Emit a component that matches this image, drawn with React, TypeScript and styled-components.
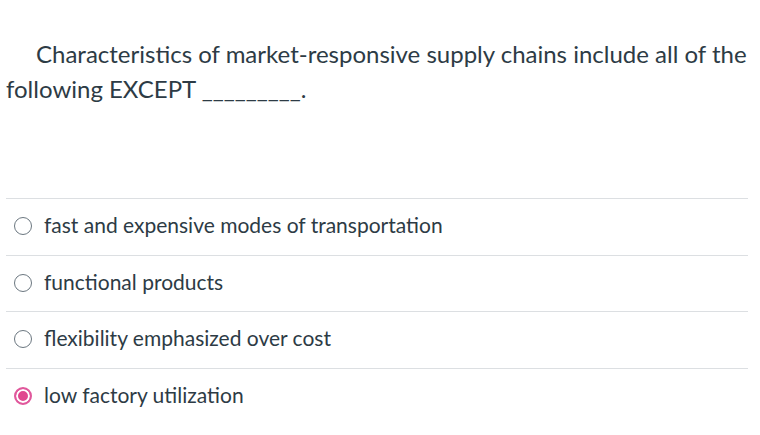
import React from "react";
import styled, { createGlobalStyle } from "styled-components";

const Global = createGlobalStyle`
  html, body { margin: 0; padding: 0; background: #ffffff; }
  body { font-family: Lato, "Open Sans", sans-serif; color: #2d3b45; }
`;

const Page = styled.div`
  padding: 36px 12px 0 6px;
`;

const Question = styled.div`
  font-size: 24px;
  line-height: 35px;
  text-indent: 30px;
  margin: 0;
  height: 162px;
`;

const List = styled.div`
  display: flex;
  flex-direction: column;
`;

const Row = styled.label`
  display: flex;
  align-items: center;
  gap: 12px;
  border-top: 1px solid #dcdfe2;
  padding-left: 8px;
  font-size: 21px;
  line-height: 24px;
  padding-bottom: 4px;
  box-sizing: border-box;
  height: 56.7px;
`;

const Radio = styled.span<{ $checked?: boolean }>`
  box-sizing: border-box;
  width: 18px;
  height: 18px;
  border-radius: 50%;
  flex-shrink: 0;
  margin-top: 2px;
  border: ${(p) => (p.$checked ? "2px solid #e0589c" : "1.5px solid #6b7780")};
  background: ${(p) => (p.$checked ? "#e0478f" : "#fff")};
  box-shadow: ${(p) => (p.$checked ? "inset 0 0 0 2px #fff" : "none")};
`;

const options = [
  { text: "fast and expensive modes of transportation", checked: false },
  { text: "functional products", checked: false },
  { text: "flexibility emphasized over cost", checked: false },
  { text: "low factory utilization", checked: true },
];

export default function App() {
  return (
    <>
      <Global />
      <Page>
        <Question>
          Characteristics of market-responsive supply chains include all of the following EXCEPT _________.
        </Question>
        <List>
          {options.map((o) => (
            <Row key={o.text}>
              <Radio $checked={o.checked} />
              <span>{o.text}</span>
            </Row>
          ))}
        </List>
      </Page>
    </>
  );
}
